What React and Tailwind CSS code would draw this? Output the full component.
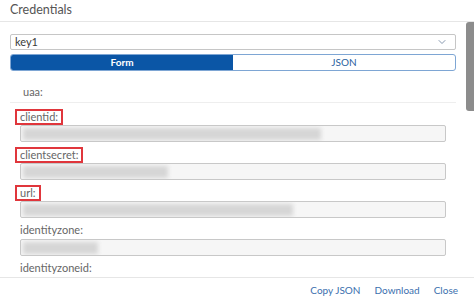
import { ChevronDown } from "lucide-react";

const fields = [
  { name: "clientid", bar: 298, marked: true },
  { name: "clientsecret", bar: 145, marked: true },
  { name: "url", bar: 270, marked: true },
  { name: "identityzone", bar: 75, marked: false },
  { name: "identityzoneid", bar: 120, marked: false },
];

function Field({ name, bar, marked }) {
  return (
    <div className="mb-[4px]">
      <div className="h-[17px] flex items-center">
        {marked ? (
          <span className="-ml-[5px] px-[3px] border-2 border-[#e0363c] leading-[10px] py-[1px]">{name}:</span>
        ) : (
          <span>{name}:</span>
        )}
      </div>
      <div className="h-[17px] w-[426px] border border-[#c8c8c8] bg-[#f6f6f6] rounded-[2px] overflow-hidden flex items-center px-[2px]">
        <div className="h-[12px] bg-[#d6d6d6] blur-[2px]" style={{ width: bar }} />
      </div>
    </div>
  );
}

export default function App() {
  return (
    <div className="w-[474px] h-[303px] bg-white flex flex-col overflow-hidden text-[11px] text-[#666666]" style={{ fontFamily: "Lato, 'Open Sans', sans-serif" }}>
      {/* Header */}
      <div className="h-[22px] border-b border-[#e6e6e6] flex items-center px-[10px]">
        <span className="text-[12.5px] text-[#555555]">Credentials</span>
      </div>

      {/* Body */}
      <div className="flex-1 flex min-h-0">
        <div className="flex-1 overflow-hidden pl-[10px] pr-[10px] pt-[12px]">
          <div className="h-[16px] border border-[#c6c6c6] rounded-[2px] flex items-center justify-between pl-[4px] pr-[7px]">
            <span className="text-[#3a3a3a]">key1</span>
            <ChevronDown size={12} strokeWidth={1.5} className="text-[#5f7594]" />
          </div>
          <div className="mt-[4px] h-[17px] flex rounded-[3px] overflow-hidden border border-[#7ea6d4]">
            <div className="w-[222px] bg-[#0b56a6] text-white font-bold text-[10px] flex items-center justify-center">Form</div>
            <div className="flex-1 text-[#2b5f9e] text-[10px] flex items-center justify-center">JSON</div>
          </div>

          <div className="h-[32px] flex items-end pl-[13px] pb-[2px] border-b border-[#eeeeee]">
            <span>uaa:</span>
          </div>

          <div className="pl-[10px] pt-[5px]">
            {fields.map((f) => (
              <Field key={f.name} {...f} />
            ))}
          </div>
        </div>
        <div className="w-[8px]">
          <div className="h-[89px] w-[8px] bg-[#8c8c8c] rounded-l-[3px]" />
        </div>
      </div>

      {/* Footer */}
      <div className="h-[26px] border-t border-[#e6e6e6] flex items-center justify-end gap-[14px] pr-[16px] text-[10px] text-[#3b6fae]">
        <span>Copy JSON</span>
        <span>Download</span>
        <span>Close</span>
      </div>
    </div>
  );
}
